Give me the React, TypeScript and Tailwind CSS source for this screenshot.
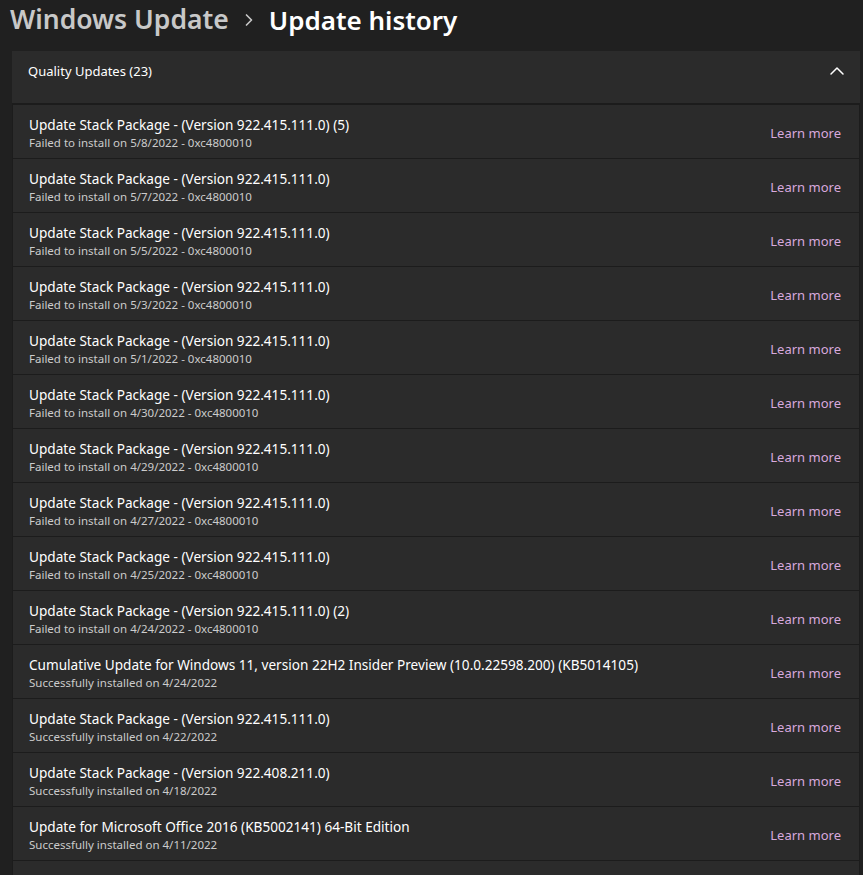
import { ChevronRight, ChevronUp } from "lucide-react";

type Update = {
  title: string;
  status: string;
};

const updates: Update[] = [
  { title: "Update Stack Package - (Version 922.415.111.0) (5)", status: "Failed to install on 5/8/2022 - 0xc4800010" },
  { title: "Update Stack Package - (Version 922.415.111.0)", status: "Failed to install on 5/7/2022 - 0xc4800010" },
  { title: "Update Stack Package - (Version 922.415.111.0)", status: "Failed to install on 5/5/2022 - 0xc4800010" },
  { title: "Update Stack Package - (Version 922.415.111.0)", status: "Failed to install on 5/3/2022 - 0xc4800010" },
  { title: "Update Stack Package - (Version 922.415.111.0)", status: "Failed to install on 5/1/2022 - 0xc4800010" },
  { title: "Update Stack Package - (Version 922.415.111.0)", status: "Failed to install on 4/30/2022 - 0xc4800010" },
  { title: "Update Stack Package - (Version 922.415.111.0)", status: "Failed to install on 4/29/2022 - 0xc4800010" },
  { title: "Update Stack Package - (Version 922.415.111.0)", status: "Failed to install on 4/27/2022 - 0xc4800010" },
  { title: "Update Stack Package - (Version 922.415.111.0)", status: "Failed to install on 4/25/2022 - 0xc4800010" },
  { title: "Update Stack Package - (Version 922.415.111.0) (2)", status: "Failed to install on 4/24/2022 - 0xc4800010" },
  { title: "Cumulative Update for Windows 11, version 22H2 Insider Preview (10.0.22598.200) (KB5014105)", status: "Successfully installed on 4/24/2022" },
  { title: "Update Stack Package - (Version 922.415.111.0)", status: "Successfully installed on 4/22/2022" },
  { title: "Update Stack Package - (Version 922.408.211.0)", status: "Successfully installed on 4/18/2022" },
  { title: "Update for Microsoft Office 2016 (KB5002141) 64-Bit Edition", status: "Successfully installed on 4/11/2022" },
];

function UpdateRow({ item }: { item: Update }) {
  return (
    <div className="flex h-[53px] items-center justify-between bg-[#2b2b2b] pl-[16px] pr-[18px]">
      <div className="flex flex-col pt-[3px]">
        <p className="text-[13.6px] leading-[18px] text-white">{item.title}</p>
        <p className="mt-[1px] text-[11.5px] leading-[16px] text-[#cccccc]">{item.status}</p>
      </div>
      <a className="text-[13px] pt-[4px] text-[#d8a9dd]">Learn more</a>
    </div>
  );
}

export default function App() {
  return (
    <div
      className="h-[875px] overflow-hidden bg-[#202020]"
      style={{ fontFamily: '"Segoe UI", "Noto Sans", sans-serif' }}
    >
      <div className="flex items-center h-[39px] pl-[10px]">
        <h1 className="text-[26.5px] font-semibold text-[#c8c8c8] leading-none">Windows Update</h1>
        <ChevronRight size={20} strokeWidth={2} className="mx-[10px] text-[#c8c8c8]" />
        <h1 className="text-[26px] font-semibold text-white leading-none">Update history</h1>
      </div>

      <div className="mt-[12px] ml-[12px] mr-[3px] flex flex-col gap-[2px] bg-[#1c1c1c]">
        <div className="flex h-[52px] items-start justify-between bg-[#2b2b2b] pl-[16px] pr-[11px] pt-[10px]">
          <p className="text-[13px] leading-[20px] text-white">Quality Updates (23)</p>
          <ChevronUp size={24} strokeWidth={1.5} className="-mt-[2px] text-white" />
        </div>
        <div className="flex flex-col gap-[1px] ml-[1px] mr-[1px]">
          {updates.map((u, i) => (
            <UpdateRow key={i} item={u} />
          ))}
          <div className="h-[53px] bg-[#2b2b2b]" />
        </div>
      </div>
    </div>
  );
}
